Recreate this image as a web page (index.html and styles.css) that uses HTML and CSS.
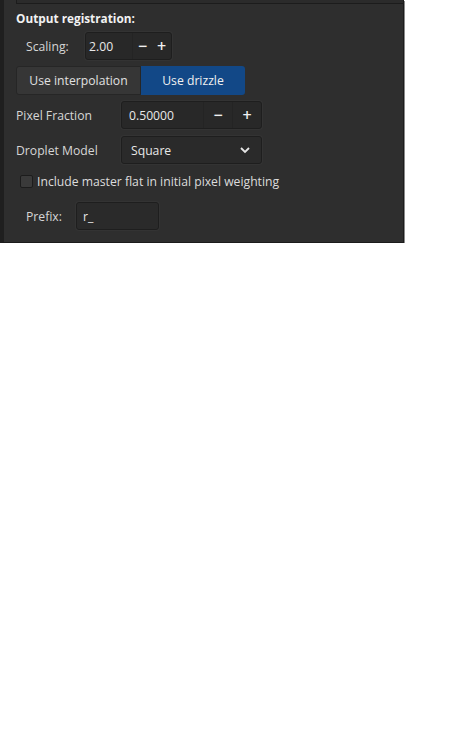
FILE: index.html
```html
<!DOCTYPE html>
<html>
<head>
<meta charset="utf-8">
<link rel="stylesheet" href="styles.css">
</head>
<body>
<div class="panel">
  <div class="prev-box"></div>
  <div class="title">Output registration:</div>
  <div class="row scaling-row">
    <span class="label scaling-label">Scaling:</span>
    <div class="spin scaling-spin">
      <span class="value">2.00</span>
      <span class="btn minus">&#8722;</span>
      <span class="btn plus">+</span>
    </div>
  </div>
  <div class="seg">
    <div class="seg-item">Use interpolation</div>
    <div class="seg-item active">Use drizzle</div>
  </div>
  <div class="row field-row">
    <span class="label wide-label">Pixel Fraction</span>
    <div class="spin wide-spin">
      <span class="value">0.50000</span>
      <span class="btn sep minus">&#8722;</span>
      <span class="btn sep plus">+</span>
    </div>
  </div>
  <div class="row field-row droplet-row">
    <span class="label wide-label">Droplet Model</span>
    <div class="select">
      <span class="value">Square</span>
      <svg class="chev" width="12" height="8" viewBox="0 0 12 8"><path d="M2 2 L6 6 L10 2" fill="none" stroke="#e6e6e6" stroke-width="1.8"/></svg>
    </div>
  </div>
  <div class="check-row">
    <span class="checkbox"></span>
    <span class="check-label">Include master flat in initial pixel weighting</span>
  </div>
  <div class="row prefix-row">
    <span class="label prefix-label">Prefix:</span>
    <div class="text-input"><span class="value">r_</span></div>
  </div>
</div>
</body>
</html>
```
FILE: styles.css
```css
html, body {
  margin: 0;
  padding: 0;
  background: #ffffff;
}
body {
  font-family: "Open Sans", "Noto Sans", sans-serif;
  font-size: 12.2px;
  color: #dcdcdc;
}
.panel {
  width: 399px;
  height: 242px;
  background: #2e2e2e;
  border-left: 4px solid #1f1f1f;
  border-right: 1px solid #1c1c1c;
  box-shadow: 1px 1px 0 0 #8a8a8a;
  border-bottom: 1px solid #1c1c1c;
  box-sizing: content-box;
  overflow: hidden;
}
.prev-box {
  margin-left: 12px;
  height: 3px;
  background: #2b2b2b;
  border-left: 1px solid #1c1c1c;
  border-bottom: 1px solid #1c1c1c;
}
.title {
  margin-left: 12px;
  margin-top: 6px;
  font-weight: 700;
  font-size: 11.8px;
  color: #f2f2f2;
  line-height: 16px;
}
.row {
  display: flex;
  align-items: center;
}
.label {
  color: #d6d6d6;
}
.scaling-row {
  margin-top: 6px;
  height: 28px;
}
.scaling-label {
  margin-left: 22px;
  width: 59px;
}
.spin {
  display: flex;
  align-items: center;
  height: 26px;
  background: #282828;
  border: 1px solid #1e1e1e;
  border-radius: 3px;
  box-shadow: 0 0 0 1px #333;
}
.scaling-spin {
  width: 85px;
}
.spin .value {
  flex: 1;
  padding-left: 3px;
  color: #e8e8e8;
}
.btn {
  width: 19px;
  height: 26px;
  display: flex;
  align-items: center;
  justify-content: center;
  font-size: 16px;
  color: #f0f0f0;
  font-weight: 600;
}
.scaling-spin .minus {
  border-left: 1px solid #242424;
}
.seg {
  display: flex;
  margin-top: 6px;
  margin-left: 12px;
  height: 29px;
}
.seg-item {
  display: flex;
  align-items: center;
  justify-content: center;
  height: 29px;
  color: #e0e0e0;
}
.seg-item:first-child {
  width: 125px;
  background: #363636;
  border-radius: 3px 0 0 3px;
  border: 1px solid #262626;
  box-sizing: border-box;
}
.seg-item.active {
  width: 104px;
  background: #124887;
  color: #f0f0f0;
  border-radius: 0 3px 3px 0;
}
.field-row {
  margin-top: 6px;
  height: 28px;
}
.wide-label {
  margin-left: 12px;
  width: 105px;
}
.wide-spin {
  width: 139px;
}
.wide-spin .value {
  padding-left: 7px;
}
.wide-spin .btn {
  width: 28px;
  border-left: 1px solid #242424;
}
.droplet-row {
  margin-top: 7px;
}
.select {
  display: flex;
  align-items: center;
  width: 139px;
  height: 26px;
  background: #2a2a2a;
  border: 1px solid #1e1e1e;
  border-radius: 3px;
  box-shadow: 0 0 0 1px #333;
}
.select .value {
  flex: 1;
  padding-left: 9px;
  color: #e8e8e8;
}
.chev {
  margin-right: 10px;
}
.check-row {
  display: flex;
  align-items: center;
  margin-top: 10px;
  margin-left: 16px;
  height: 14px;
}
.checkbox {
  width: 11px;
  height: 11px;
  background: #3a3a3a;
  border: 1px solid #1c1c1c;
  border-radius: 2px;
  margin-right: 4px;
}
.check-label {
  color: #dcdcdc;
}
.prefix-row {
  margin-top: 14px;
  height: 28px;
}
.prefix-label {
  margin-left: 22px;
  width: 50px;
}
.text-input {
  display: flex;
  align-items: center;
  width: 81px;
  height: 26px;
  background: #2a2a2a;
  border: 1px solid #1e1e1e;
  border-radius: 3px;
  box-shadow: 0 0 0 1px #333;
}
.text-input .value {
  padding-left: 6px;
  color: #e8e8e8;
}
```
